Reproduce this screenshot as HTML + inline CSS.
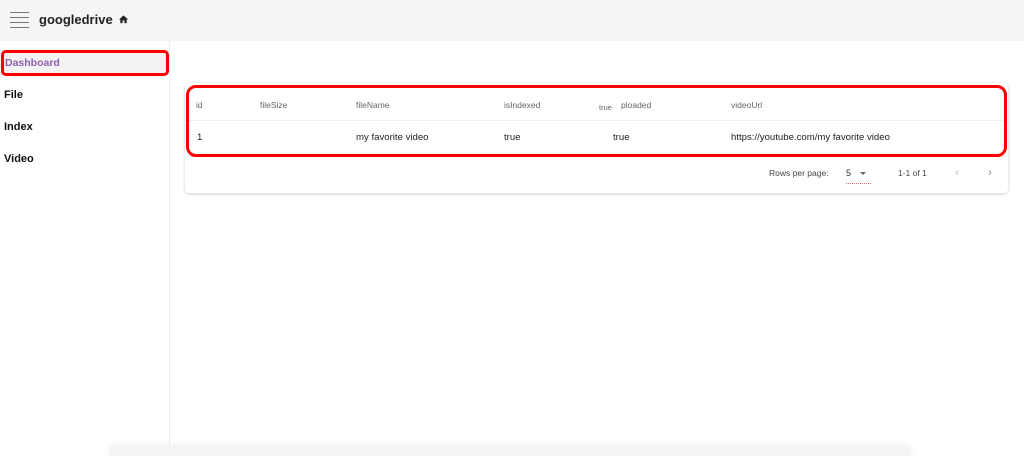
<!DOCTYPE html><html><head><style>
body{margin:0;width:1024px;height:452px;overflow:hidden;background:#fff;font-family:"Liberation Sans",Arial,sans-serif;position:relative}
.hdr{position:absolute;left:0;top:0;width:1024px;height:41px;background:#f5f5f5}
.side{position:absolute;left:0;top:41px;width:169px;height:411px;border-right:1px solid #eee}
.t{position:absolute;white-space:nowrap}
.card{position:absolute;left:185px;top:83px;width:823px;height:110px;border-radius:4px;box-shadow:0 1px 3px rgba(0,0,0,.2)}
.red{position:absolute;border:3px solid #f00;border-radius:10px;box-sizing:border-box}
.h{font-size:8.5px;color:#666;top:100px}
.c{font-size:9.6px;color:#222;top:132px}
</style></head><body>
<div class="hdr"></div>
<div style="position:absolute;left:10px;top:12px;width:19px">
<div style="height:1px;background:#777;margin-bottom:4px"></div><div style="height:1px;background:#777;margin-bottom:4px"></div><div style="height:1px;background:#777;margin-bottom:4px"></div><div style="height:1px;background:#777"></div></div>
<div class="t" style="left:39px;top:12px;font-size:13px;font-weight:bold;color:#222">googledrive</div>
<svg style="position:absolute;left:118px;top:14px" width="11" height="10" viewBox="0 0 24 22"><path d="M10 20v-6h4v6h5v-8h3L12 3 2 12h3v8z" fill="#222"/></svg>
<div class="side"></div>
<div style="position:absolute;left:0;top:50px;width:169px;height:25px;background:#f3f3f3"></div>
<div class="red" style="left:1px;top:50px;width:168px;height:26px;border-radius:5px"></div>
<div class="t" style="left:5px;top:57px;font-size:10.5px;font-weight:bold;color:#8e5fb0">Dashboard</div>
<div class="t" style="left:4px;top:89px;font-size:11px;font-weight:bold;color:#111">File</div>
<div class="t" style="left:4px;top:121px;font-size:11px;font-weight:bold;color:#111">Index</div>
<div class="t" style="left:4px;top:153px;font-size:11px;font-weight:bold;color:#111">Video</div>
<div class="card"></div>
<div style="position:absolute;left:187px;top:120px;width:819px;height:1px;background:#eee"></div>
<div style="position:absolute;left:187px;top:156px;width:819px;height:1px;background:#eee"></div>
<div class="red" style="left:186px;top:85px;width:821px;height:72px"></div>
<div class="t h" style="left:196px">id</div>
<div class="t h" style="left:260px">fileSize</div>
<div class="t h" style="left:356px">fileName</div>
<div class="t h" style="left:504px">isIndexed</div>
<div class="t h" style="left:599px;top:103px;font-size:7.5px">true</div>
<div class="t h" style="left:621px">ploaded</div>
<div class="t h" style="left:731px">videoUrl</div>
<div class="t c" style="left:197px">1</div>
<div class="t c" style="left:356px">my favorite video</div>
<div class="t c" style="left:504px">true</div>
<div class="t c" style="left:613px">true</div>
<div class="t c" style="left:731px">https://youtube.com/my favorite video</div>
<div class="t" style="left:769px;top:168px;font-size:8.5px;color:#444">Rows per page:</div>
<div class="t" style="left:846px;top:168px;font-size:9px;color:#333">5</div>
<div style="position:absolute;left:860px;top:172px;border:3px solid transparent;border-top:3px solid #666"></div>
<div style="position:absolute;left:846px;top:183px;width:25px;border-top:1px dotted #c66"></div>
<div class="t" style="left:898px;top:168px;font-size:8.5px;color:#444">1-1 of 1</div>
<div class="t" style="left:955px;top:165px;font-size:12px;color:#bbb">‹</div>
<div class="t" style="left:988px;top:165px;font-size:12px;color:#999">›</div>
<div style="position:absolute;left:110px;top:446px;width:800px;height:10px;background:#f4f4f4;box-shadow:0 0 8px rgba(0,0,0,.08)"></div>
</body></html>
